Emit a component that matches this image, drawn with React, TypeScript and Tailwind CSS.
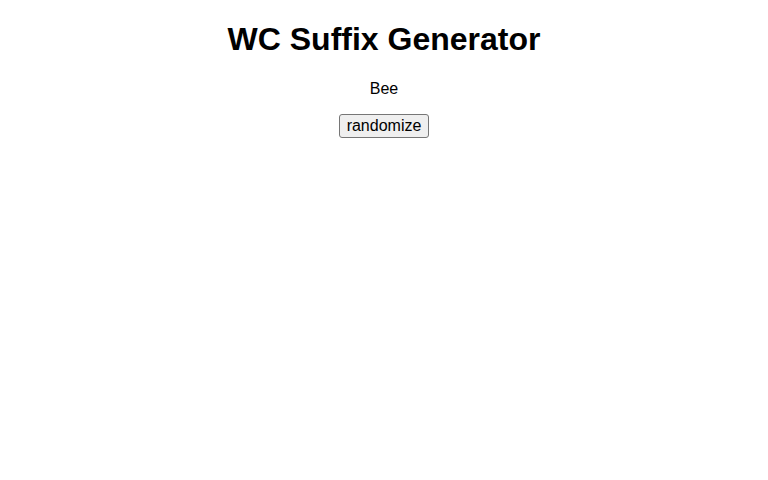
import React, { useState } from "react";

const suffixes = ["Bee", "Claw", "Fang", "Heart", "Pelt", "Tail", "Whisker", "Storm", "Fur", "Leaf"];

export default function App() {
  const [suffix, setSuffix] = useState("Bee");
  return (
    <div className="text-center text-black bg-white" style={{ fontFamily: '"Liberation Sans", Arial, sans-serif' }}>
      <h1 className="text-[32px] leading-[36.8px] font-bold my-[21.44px] pt-0">WC Suffix Generator</h1>
      <p className="text-[16px] leading-[18.4px] my-4">{suffix}</p>
      <button
        className="text-[16px] leading-[18.4px] px-[7px] py-[2px] bg-[#efefef] border border-[#767676] rounded-[3px] text-black"
        onClick={() => setSuffix(suffixes[Math.floor(Math.random() * suffixes.length)])}
      >
        randomize
      </button>
    </div>
  );
}
